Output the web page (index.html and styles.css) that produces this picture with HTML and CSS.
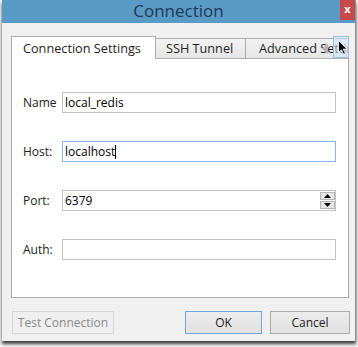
FILE: index.html
```html
<!DOCTYPE html>
<html>
<head>
<meta charset="utf-8">
<title>Connection</title>
<link rel="stylesheet" href="styles.css">
</head>
<body>
<div class="window">
  <div class="titlebar">
    <span></span>
    <span class="title">Connection</span>
    <span class="close">x</span>
  </div>
  <div class="content">
    <div class="tabbar">
      <div class="tab active t1">Connection Settings</div>
      <div class="tab t2">SSH Tunnel</div>
      <div class="tab t3">Advanced Settings</div>
      <div class="scroll-left"><svg width="7" height="10" viewBox="0 0 7 10"><path d="M6 0 L0 5 L6 10 Z" fill="#b4b4b4"/></svg></div>
      <div class="scroll-right">
        <svg class="pointer" width="10" height="15" viewBox="0 0 10 15"><path d="M0.5 0.5 L0.5 12.5 L3.4 9.8 L5.6 14.3 L7.4 13.5 L5.2 9.1 L9 9.1 Z" fill="#000" stroke="#fff" stroke-width="0.8"/></svg>
      </div>
    </div>
    <div class="pane">
      <div class="form">
        <label class="lbl">Name</label>
        <div class="input">local_redis</div>
        <label class="lbl">Host:</label>
        <div class="input focus">localhost<span class="caret"></span></div>
        <label class="lbl">Port:</label>
        <div class="input spin">6379
          <div class="spinbtns">
            <div class="sb"><svg width="7" height="4" viewBox="0 0 7 4"><path d="M0 4 L3.5 0 L7 4 Z" fill="#000"/></svg></div>
            <div class="sb"><svg width="7" height="4" viewBox="0 0 7 4"><path d="M0 0 L3.5 4 L7 0 Z" fill="#000"/></svg></div>
          </div>
        </div>
        <label class="lbl">Auth:</label>
        <div class="input"></div>
      </div>
    </div>
    <div class="buttons">
      <button class="btn test">Test Connection</button>
      <span class="spacer"></span>
      <button class="btn ok">OK</button>
      <button class="btn cancel">Cancel</button>
    </div>
  </div>
</div>
</body>
</html>
```
FILE: styles.css
```css
html, body {
  margin: 0;
  padding: 0;
}
body {
  width: 358px;
  height: 347px;
  overflow: hidden;
  background: #f4f4f4;
  font-family: "Open Sans", "Noto Sans", sans-serif;
  font-size: 12px;
  color: #1e1e1e;
}
.window {
  margin-left: 2px;
  width: 353px;
  height: 341px;
  background: #f0f0f0;
  border-right: 1px solid #8f8f8f;
  box-shadow: 0 3px 3px rgba(0, 0, 0, 0.75);
  display: flex;
  flex-direction: column;
}
.titlebar {
  height: 23px;
  background: #5a9bc6;
  display: grid;
  grid-template-columns: 1fr auto 1fr;
  align-items: start;
}
.title {
  font-size: 17px;
  line-height: 22px;
  color: #1c3a55;
}
.close {
  justify-self: end;
  width: 15px;
  height: 20px;
  background: #c9484b;
  color: #fff;
  font-weight: bold;
  font-size: 11px;
  line-height: 18px;
  text-align: center;
}
.content {
  padding: 13px 5px 7px 9px;
  display: flex;
  flex-direction: column;
}
.tabbar {
  position: relative;
  z-index: 1;
  height: 23px;
  width: 338px;
  overflow: hidden;
  display: flex;
  align-items: flex-end;
  font-size: 12.7px;
}
.tab {
  box-sizing: border-box;
  flex: none;
  height: 21px;
  border: 1px solid #adadad;
  border-left: none;
  background: linear-gradient(#f2f2f2, #e6e6e6);
  line-height: 19px;
  white-space: nowrap;
  color: #1e1e1e;
}
.tab.active {
  height: 23px;
  border-left: 1px solid #adadad;
  border-bottom: none;
  background: #fff;
  line-height: 22px;
}
.t1 {
  width: 145px;
  padding-left: 11px;
}
.t2 {
  width: 90px;
  padding-left: 10px;
}
.t3 {
  width: 110px;
  padding-left: 13px;
}
.scroll-left {
  position: absolute;
  left: 309px;
  top: 5px;
  width: 10px;
  height: 15px;
  display: flex;
  align-items: center;
  justify-content: center;
}
.scroll-right {
  position: absolute;
  left: 322px;
  top: 0;
  box-sizing: border-box;
  width: 16px;
  height: 22px;
  background: rgba(205, 228, 247, 0.55);
  border: 1px solid #9cc3e6;
}
.pointer {
  position: absolute;
  left: 4px;
  top: 3px;
}
.pane {
  box-sizing: border-box;
  width: 338px;
  height: 240px;
  margin-top: -1px;
  border: 1px solid #adadad;
  background: #fff;
}
.form {
  display: grid;
  grid-template-columns: 39px 1fr;
  grid-auto-rows: 21px;
  row-gap: 28px;
  padding: 33px 12px 0 11px;
}
.lbl {
  line-height: 21px;
  color: #222;
}
.input {
  position: relative;
  box-sizing: border-box;
  height: 21px;
  border: 1px solid #c2c2c2;
  background: #fff;
  padding: 0 2px;
  line-height: 19px;
  color: #000;
}
.input.focus {
  border-color: #86b7e8;
}
.caret {
  display: inline-block;
  width: 1px;
  height: 14px;
  background: #000;
  vertical-align: -3px;
}
.spinbtns {
  position: absolute;
  right: 0;
  top: 1px;
  width: 15px;
  display: flex;
  flex-direction: column;
  gap: 1px;
}
.sb {
  box-sizing: border-box;
  height: 8px;
  border: 1px solid #b5b5b5;
  background: #e8e8e8;
  display: flex;
  align-items: center;
  justify-content: center;
}
.buttons {
  display: flex;
  margin-top: 13px;
  gap: 8px;
}
.spacer {
  flex: 1;
}
.btn {
  box-sizing: border-box;
  height: 23px;
  padding: 0;
  font-family: "Open Sans", "Noto Sans", sans-serif;
  font-size: 12px;
  color: #1e1e1e;
  border: 1px solid #adadad;
  background: linear-gradient(#ececec, #e1e1e1);
  border-radius: 0;
}
.btn.test {
  width: 102px;
  margin-left: 1px;
  color: #8a8a8a;
  border-color: #d6d6d6;
  background: #efefef;
}
.btn.ok {
  width: 77px;
  border-color: #72a6d8;
}
.btn.cancel {
  width: 80px;
}
```
